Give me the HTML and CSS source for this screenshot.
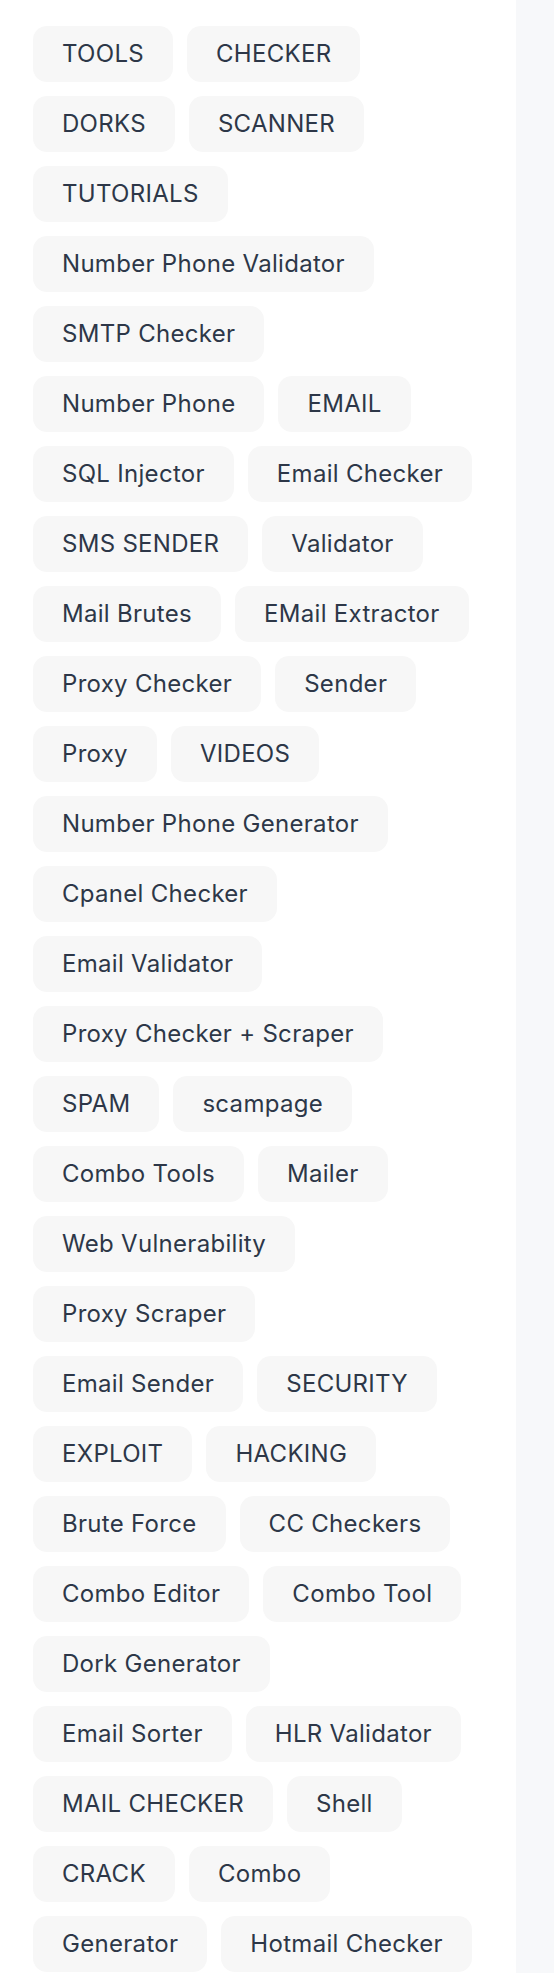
FILE: index.html
```html
<!DOCTYPE html>
<html>
<head>
<meta charset="utf-8">
<link rel="stylesheet" href="styles.css">
</head>
<body>
<div class="layout">
  <main class="main">
    <div class="tags">
      <a class="tag">TOOLS</a>
      <a class="tag">CHECKER</a>
      <a class="tag">DORKS</a>
      <a class="tag">SCANNER</a>
      <a class="tag">TUTORIALS</a>
      <a class="tag">Number Phone Validator</a>
      <a class="tag">SMTP Checker</a>
      <a class="tag">Number Phone</a>
      <a class="tag">EMAIL</a>
      <a class="tag">SQL Injector</a>
      <a class="tag">Email Checker</a>
      <a class="tag">SMS SENDER</a>
      <a class="tag">Validator</a>
      <a class="tag">Mail Brutes</a>
      <a class="tag">EMail Extractor</a>
      <a class="tag">Proxy Checker</a>
      <a class="tag">Sender</a>
      <a class="tag">Proxy</a>
      <a class="tag">VIDEOS</a>
      <a class="tag">Number Phone Generator</a>
      <a class="tag">Cpanel Checker</a>
      <a class="tag">Email Validator</a>
      <a class="tag">Proxy Checker + Scraper</a>
      <a class="tag">SPAM</a>
      <a class="tag">scampage</a>
      <a class="tag">Combo Tools</a>
      <a class="tag">Mailer</a>
      <a class="tag">Web Vulnerability</a>
      <a class="tag">Proxy Scraper</a>
      <a class="tag">Email Sender</a>
      <a class="tag">SECURITY</a>
      <a class="tag">EXPLOIT</a>
      <a class="tag">HACKING</a>
      <a class="tag">Brute Force</a>
      <a class="tag">CC Checkers</a>
      <a class="tag">Combo Editor</a>
      <a class="tag">Combo Tool</a>
      <a class="tag">Dork Generator</a>
      <a class="tag">Email Sorter</a>
      <a class="tag">HLR Validator</a>
      <a class="tag">MAIL CHECKER</a>
      <a class="tag">Shell</a>
      <a class="tag">CRACK</a>
      <a class="tag">Combo</a>
      <a class="tag">Generator</a>
      <a class="tag">Hotmail Checker</a>
    </div>
  </main>
  <aside class="sidebar"></aside>
</div>
</body>
</html>
```
FILE: styles.css
```css
html, body {
  margin: 0;
  padding: 0;
  background: #ffffff;
}
body {
  font-family: Inter, "Noto Sans", sans-serif;
  color: #2d3748;
}
.layout {
  display: flex;
  min-height: 1973px;
}
.main {
  width: 516px;
  box-sizing: border-box;
  padding: 26px 40px 0 33px;
}
.sidebar {
  flex: 1;
  background: #f7f8fa;
}
.tags {
  display: flex;
  flex-wrap: wrap;
  gap: 14px 14px;
}
.tag {
  display: block;
  box-sizing: border-box;
  height: 56px;
  padding: 0 29px;
  line-height: 56px;
  font-size: 24px;
  letter-spacing: 0.3px;
  background: #f7f7f7;
  border-radius: 14px;
  color: #2d3748;
  text-decoration: none;
  white-space: nowrap;
}
```
